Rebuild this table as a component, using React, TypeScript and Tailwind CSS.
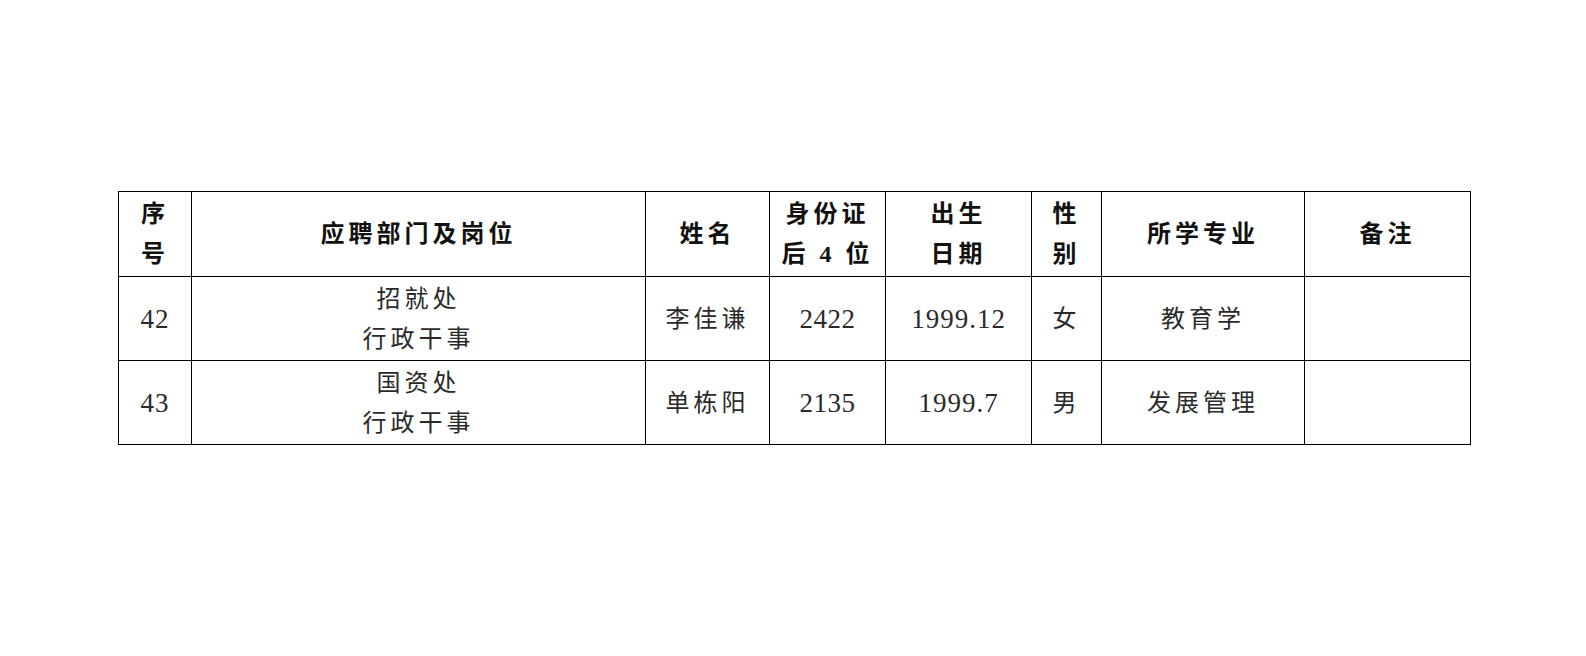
const font = "font-['Liberation_Serif','Noto_Sans_CJK_SC',serif]";

const rows = [
  { no: "42", dept: "招就处", post: "行政干事", name: "李佳谦", id: "2422", birth: "1999.12", sex: "女", major: "教育学" },
  { no: "43", dept: "国资处", post: "行政干事", name: "单栋阳", id: "2135", birth: "1999.7", sex: "男", major: "发展管理" },
];

export default function App() {
  return (
    <div className={`min-h-[656px] w-[1586px] bg-white pl-[118px] pt-[191px] ${font}`}>
      <table className="w-[1352px] table-fixed border-collapse text-center">
        <colgroup>
          <col className="w-[73px]" />
          <col className="w-[454px]" />
          <col className="w-[124px]" />
          <col className="w-[116px]" />
          <col className="w-[146px]" />
          <col className="w-[70px]" />
          <col className="w-[203px]" />
          <col className="w-[166px]" />
        </colgroup>
        <thead>
          <tr className="h-[85px] text-[24px] leading-[40px] tracking-[4px] text-[#111]">
            <th className="border border-black p-0 font-semibold">
              序<br />号
            </th>
            <th className="border border-black p-0 font-semibold">应聘部门及岗位</th>
            <th className="border border-black p-0 font-semibold">姓名</th>
            <th className="border border-black p-0 font-semibold">
              身份证<br />后 4 位
            </th>
            <th className="border border-black p-0 font-semibold">
              出生<br />日期
            </th>
            <th className="border border-black p-0 font-semibold">
              性<br />别
            </th>
            <th className="border border-black p-0 font-semibold">所学专业</th>
            <th className="border border-black p-0 font-semibold">备注</th>
          </tr>
        </thead>
        <tbody>
          {rows.map((r) => (
            <tr key={r.no} className="h-[84px] text-[24px] leading-[40px] tracking-[4px] text-[#2a2a2a]">
              <td className="border border-black p-0 text-[27px] tracking-[1px]">{r.no}</td>
              <td className="border border-black p-0">
                {r.dept}
                <br />
                {r.post}
              </td>
              <td className="border border-black p-0">{r.name}</td>
              <td className="border border-black p-0 text-[27px] tracking-[0.5px]">{r.id}</td>
              <td className="border border-black p-0 text-[27px] tracking-[1px]">{r.birth}</td>
              <td className="border border-black p-0">{r.sex}</td>
              <td className="border border-black p-0">{r.major}</td>
              <td className="border border-black p-0"></td>
            </tr>
          ))}
        </tbody>
      </table>
    </div>
  );
}
